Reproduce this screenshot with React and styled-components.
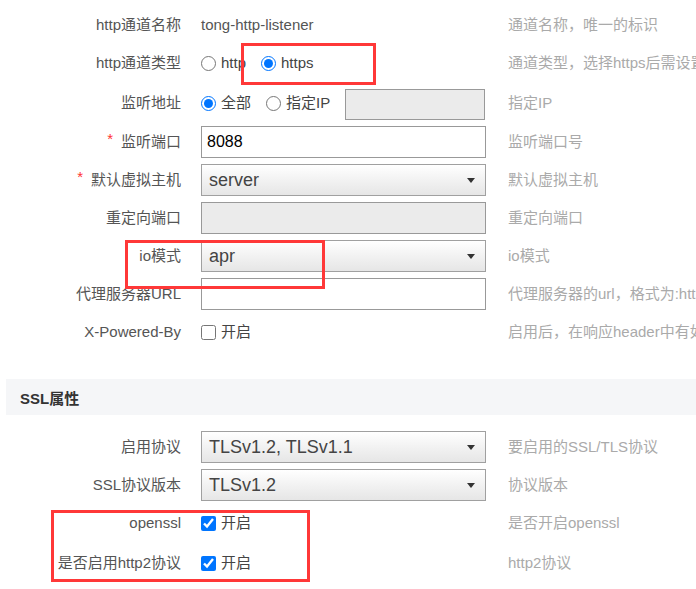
import React from "react";
import styled, { createGlobalStyle } from "styled-components";

const GlobalStyle = createGlobalStyle`
  html, body { margin: 0; padding: 0; background: #fff; overflow: hidden; }
  body {
    font-family: "Liberation Sans", Arial, "Noto Sans CJK SC", sans-serif;
    font-size: 15px;
    color: #555;
  }
  * { box-sizing: border-box; }
`;

const Page = styled.div`
  position: relative;
  width: 696px;
  height: 589px;
  overflow: hidden;
  padding-top: 6px;
`;

const Row = styled.div`
  display: grid;
  grid-template-columns: 181px 285px max-content;
  column-gap: 20px;
  align-items: center;
  height: ${(p) => p.$h || 38}px;
  padding-top: ${(p) => (p.$pt === undefined ? 6 : p.$pt)}px;
`;

const Label = styled.div`
  justify-self: end;
  text-align: right;
  white-space: nowrap;
  color: #555;
  font-size: 15px;
  line-height: 20px;
`;

const Req = styled.span`
  color: #f33;
  margin-right: 8px;
  position: relative;
  top: -3px;
`;

const Value = styled.div`
  color: #555;
  font-size: 15px;
  line-height: 20px;
  white-space: nowrap;
`;

const Hint = styled.div`
  margin-left: 2px;
  color: #aaa;
  font-size: 15px;
  line-height: 20px;
  white-space: nowrap;
`;

const Group = styled.div`
  display: flex;
  align-items: center;
  height: 100%;
  white-space: nowrap;
`;

const Choice = styled.label`
  display: inline-flex;
  align-items: center;
  gap: 5px;
  margin-right: 15px;
  color: #444;
  font-size: 15px;
  line-height: 20px;
`;

const Radio = styled.input.attrs({ type: "radio" })`
  width: 15px;
  height: 15px;
  margin: 0;
  accent-color: #0075ff;
`;

const Check = styled.input.attrs({ type: "checkbox" })`
  width: 15px;
  height: 15px;
  margin: 0;
  accent-color: #0075ff;
`;

const TextInput = styled.input`
  width: ${(p) => p.$w || 285}px;
  height: ${(p) => p.$hgt || 32}px;
  align-self: end;
  border: 1px solid #999;
  background: ${(p) => (p.disabled ? "#ebebeb" : "#fff")};
  padding: 0 5px;
  margin: 0;
  font-family: "Liberation Sans", Arial, sans-serif;
  font-size: 16px;
  color: #000;
  outline: none;
`;

const SelectBox = styled.div`
  width: 285px;
  height: 32px;
  display: flex;
  align-items: center;
  justify-content: space-between;
  border: 1px solid #a0a0a0;
  background: linear-gradient(to bottom, #ffffff 0%, #f2f2f2 50%, #e6e6e6 100%);
  padding: 0 10px 0 7px;
  font-family: "Liberation Sans", Arial, sans-serif;
  font-size: 18px;
  color: #444;
  white-space: nowrap;
`;

const SectionHeader = styled.div`
  margin: 31px 0 10px 6px;
  height: 36px;
  display: flex;
  align-items: center;
  padding-left: 14px;
  background: #f5f6f8;
  font-weight: bold;
  font-size: 15px;
  color: #333;
`;

const Mark = styled.div`
  position: absolute;
  left: ${(p) => p.$x}px;
  top: ${(p) => p.$y}px;
  width: ${(p) => p.$w}px;
  height: ${(p) => p.$h}px;
  border: 3px solid #ff3838;
  pointer-events: none;
`;

const Arrow = () => (
  <svg width="8" height="5" viewBox="0 0 8 5" aria-hidden="true">
    <polygon points="0,0 8,0 4,5" fill="#333" />
  </svg>
);

const Select = ({ value }) => (
  <SelectBox role="combobox">
    <span>{value}</span>
    <Arrow />
  </SelectBox>
);

export default function App() {
  return (
    <>
      <GlobalStyle />
      <Page>
        <Row $pt={0}>
          <Label>http通道名称</Label>
          <Value>tong-http-listener</Value>
          <Hint>通道名称，唯一的标识</Hint>
        </Row>
        <Row $pt={0}>
          <Label>http通道类型</Label>
          <Group>
            <Choice>
              <Radio name="type" />
              http
            </Choice>
            <Choice>
              <Radio name="type" defaultChecked />
              https
            </Choice>
          </Group>
          <Hint>通道类型，选择https后需设置SSL属性</Hint>
        </Row>
        <Row $pt={4}>
          <Label>监听地址</Label>
          <Group>
            <Choice>
              <Radio name="addr" defaultChecked />
              全部
            </Choice>
            <Choice>
              <Radio name="addr" />
              指定IP
            </Choice>
            <TextInput $w={140} $hgt={31} disabled />
          </Group>
          <Hint>指定IP</Hint>
        </Row>
        <Row>
          <Label>
            <Req>*</Req>监听端口
          </Label>
          <TextInput defaultValue="8088" />
          <Hint>监听端口号</Hint>
        </Row>
        <Row>
          <Label>
            <Req>*</Req>默认虚拟主机
          </Label>
          <Select value="server" />
          <Hint>默认虚拟主机</Hint>
        </Row>
        <Row>
          <Label>重定向端口</Label>
          <TextInput disabled />
          <Hint>重定向端口</Hint>
        </Row>
        <Row>
          <Label>io模式</Label>
          <Select value="apr" />
          <Hint>io模式</Hint>
        </Row>
        <Row>
          <Label>代理服务器URL</Label>
          <TextInput />
          <Hint>代理服务器的url，格式为:http://ip:port</Hint>
        </Row>
        <Row>
          <Label>X-Powered-By</Label>
          <Group>
            <Choice>
              <Check />
              开启
            </Choice>
          </Group>
          <Hint>启用后，在响应header中有如下字段</Hint>
        </Row>

        <SectionHeader>SSL属性</SectionHeader>

        <Row>
          <Label>启用协议</Label>
          <Select value="TLSv1.2, TLSv1.1" />
          <Hint>要启用的SSL/TLS协议</Hint>
        </Row>
        <Row>
          <Label>SSL协议版本</Label>
          <Select value="TLSv1.2" />
          <Hint>协议版本</Hint>
        </Row>
        <Row>
          <Label>openssl</Label>
          <Group>
            <Choice>
              <Check defaultChecked />
              开启
            </Choice>
          </Group>
          <Hint>是否开启openssl</Hint>
        </Row>
        <Row $pt={8} $h={40}>
          <Label>是否启用http2协议</Label>
          <Group>
            <Choice>
              <Check defaultChecked />
              开启
            </Choice>
          </Group>
          <Hint>http2协议</Hint>
        </Row>

        <Mark $x={241} $y={43} $w={135} $h={42} />
        <Mark $x={125} $y={240} $w={200} $h={49} />
        <Mark $x={51} $y={510} $w={259} $h={72} />
      </Page>
    </>
  );
}
